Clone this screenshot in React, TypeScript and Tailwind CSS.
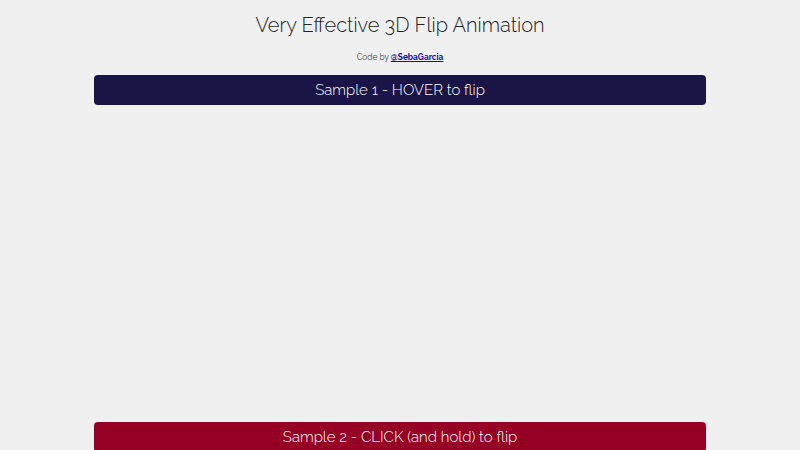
import { useState } from 'react'

const font = { fontFamily: 'Raleway, Lato, "Open Sans", sans-serif' }

function FlipCard({ label, color, mode }: { label: string; color: string; mode: 'hover' | 'click' }) {
  const [flipped, setFlipped] = useState(false)
  const handlers =
    mode === 'hover'
      ? { onMouseEnter: () => setFlipped(true), onMouseLeave: () => setFlipped(false) }
      : { onMouseDown: () => setFlipped(true), onMouseUp: () => setFlipped(false), onMouseLeave: () => setFlipped(false) }

  return (
    <section className="w-[612px] mx-auto" {...handlers}>
      <div className={`h-[30px] rounded-[4px] flex items-center justify-center text-white text-[15px] font-light ${color}`}>
        {label}
      </div>
      <div className="h-[317px]">{flipped && null}</div>
    </section>
  )
}

export default function App() {
  return (
    <div className="h-screen bg-[#f0f0f0] text-[#222] overflow-hidden" style={font}>
      <h1 className="text-center text-[20px] font-light pt-[10px] leading-[30px]">Very Effective 3D Flip Animation</h1>
      <p className="text-center text-[8.3px] text-[#444] mt-[11px] leading-[12px]">
        Code by{' '}
        <a href="#" className="text-[#1a0dab] font-bold underline">
          @SebaGarcia
        </a>
      </p>
      <div className="mt-[12px]">
        <FlipCard label="Sample 1 - HOVER to flip" color="bg-[#1b1446]" mode="hover" />
        <FlipCard label="Sample 2 - CLICK (and hold) to flip" color="bg-[#960024]" mode="click" />
      </div>
    </div>
  )
}
